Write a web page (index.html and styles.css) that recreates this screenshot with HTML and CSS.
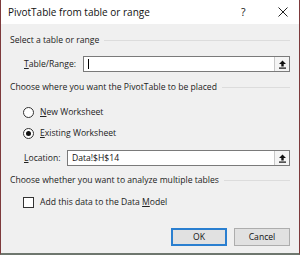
FILE: index.html
```html
<!DOCTYPE html>
<html lang="en">
<head>
  <meta charset="UTF-8">
  <title>PivotTable from table or range</title>
  <link rel="stylesheet" href="styles.css">
</head>
<body>

<div class="dialog">
  <div class="titlebar">
    <span class="title">PivotTable from table or range</span>
    <span class="help">?</span>
    <span class="close">
      <svg width="10" height="10" viewBox="0 0 10 10"><path d="M0.5 0.5 L9.5 9.5 M9.5 0.5 L0.5 9.5" stroke="#222" stroke-width="1" fill="none"/></svg>
    </span>
  </div>

  <div class="content">
    <div class="group-head first"><span>Select a table or range</span><i class="rule"></i></div>

    <div class="field row-range">
      <label class="lbl lbl-range"><u>T</u>able/Range:</label>
      <div class="input">
        <span class="caret"></span>
        <span class="pick">
          <svg width="9" height="9" viewBox="0 0 9 9"><path d="M4.5 0.5 L8 4 H5.7 V6.5 H3.3 V4 H1 Z" fill="#111"/><rect x="1" y="7.5" width="7" height="1.2" fill="#111"/></svg>
        </span>
      </div>
    </div>

    <div class="group-head second"><span>Choose where you want the PivotTable to be placed</span><i class="rule"></i></div>

    <div class="option opt-new"><span class="radio"></span><span><u>N</u>ew Worksheet</span></div>
    <div class="option opt-existing"><span class="radio checked"></span><span><u>E</u>xisting Worksheet</span></div>

    <div class="field row-location">
      <label class="lbl lbl-location"><u>L</u>ocation:</label>
      <div class="input">
        <span class="value">Data!$H$14</span>
        <span class="pick">
          <svg width="9" height="9" viewBox="0 0 9 9"><path d="M4.5 0.5 L8 4 H5.7 V6.5 H3.3 V4 H1 Z" fill="#111"/><rect x="1" y="7.5" width="7" height="1.2" fill="#111"/></svg>
        </span>
      </div>
    </div>

    <div class="group-head third"><span>Choose whether you want to analyze multiple tables</span><i class="rule"></i></div>

    <div class="option opt-model"><span class="check"></span><span>Add this data to the Data <u>M</u>odel</span></div>

    <div class="buttons">
      <button type="button" class="btn default">OK</button>
      <button type="button" class="btn">Cancel</button>
    </div>
  </div>
</div>

</body>
</html>
```

FILE: styles.css
```css
* {
  box-sizing: border-box;
}
body {
  margin: 0;
  width: 300px;
  height: 255px;
  overflow: hidden;
  font-family: 'Open Sans', 'Noto Sans', sans-serif;
  font-size: 8.6px;
  color: #222;
  background: #d8d8d8;
}
u {
  text-decoration: underline;
  text-underline-offset: 1px;
}
.dialog {
  width: 300px;
  height: 255px;
  background: #f0f0f0;
  border-left: 1px solid #7d3a3c;
  border-right: 1px solid #7d3a3c;
  border-bottom: 2px solid #6e776e;
  display: flex;
  flex-direction: column;
}
.titlebar {
  height: 24px;
  background: #fff;
  display: flex;
  align-items: center;
  padding-left: 7px;
  font-size: 10px;
  color: #111;
}
.title {
  flex: 1;
}
.help {
  width: 8px;
  margin-right: 29px;
  font-size: 10.5px;
}
.close {
  width: 10px;
  margin-right: 11px;
  display: flex;
}
.content {
  flex: 1;
  display: flex;
  flex-direction: column;
  padding: 0 9px 0 9px;
}
.group-head {
  height: 14px;
  display: flex;
  align-items: center;
  gap: 5px;
}
.group-head .rule {
  flex: 1;
  border-top: 1px solid #dcdcdc;
  margin-top: 1px;
}
.group-head.first {
  margin-top: 9px;
}
.group-head.second {
  margin-top: 8px;
}
.group-head.third {
  margin-top: 7px;
}
.field {
  display: flex;
  align-items: center;
  height: 16px;
}
.row-range {
  margin-top: 9px;
}
.row-location {
  margin-top: 10px;
}
.lbl {
  padding-left: 14px;
}
.lbl-range {
  width: 73px;
}
.lbl-location {
  width: 57px;
}
.input {
  flex: 1;
  height: 16px;
  background: #fff;
  border: 1px solid #7a7a7a;
  display: flex;
  align-items: center;
  padding-left: 4px;
}
.caret {
  width: 1px;
  height: 10px;
  background: #000;
  flex: 0 0 auto;
}
.value {
  color: #111;
}
.pick {
  margin-left: auto;
  width: 15px;
  height: 14px;
  background: #f4f4f4;
  border-left: 1px solid #c8c8c8;
  display: flex;
  align-items: center;
  justify-content: center;
}
.option {
  display: flex;
  align-items: center;
  height: 14px;
  padding-left: 13px;
  gap: 6px;
}
.opt-new {
  margin-top: 11px;
}
.opt-existing {
  margin-top: 7px;
}
.opt-model {
  margin-top: 8px;
}
.radio {
  width: 11px;
  height: 11px;
  border: 1px solid #333;
  border-radius: 50%;
  background: #fff;
  display: flex;
  align-items: center;
  justify-content: center;
}
.radio.checked::after {
  content: "";
  width: 5px;
  height: 5px;
  border-radius: 50%;
  background: #111;
}
.check {
  width: 11px;
  height: 11px;
  border: 1px solid #333;
  background: #fff;
}
.buttons {
  margin-top: 19px;
  display: flex;
  justify-content: flex-end;
  gap: 7px;
}
.btn {
  width: 56px;
  height: 18px;
  padding: 0;
  font-family: inherit;
  font-size: 8.6px;
  color: #111;
  background: #e1e1e1;
  border: 1px solid #adadad;
}
.btn.default {
  border: 2px solid #2a7fd0;
}
```
